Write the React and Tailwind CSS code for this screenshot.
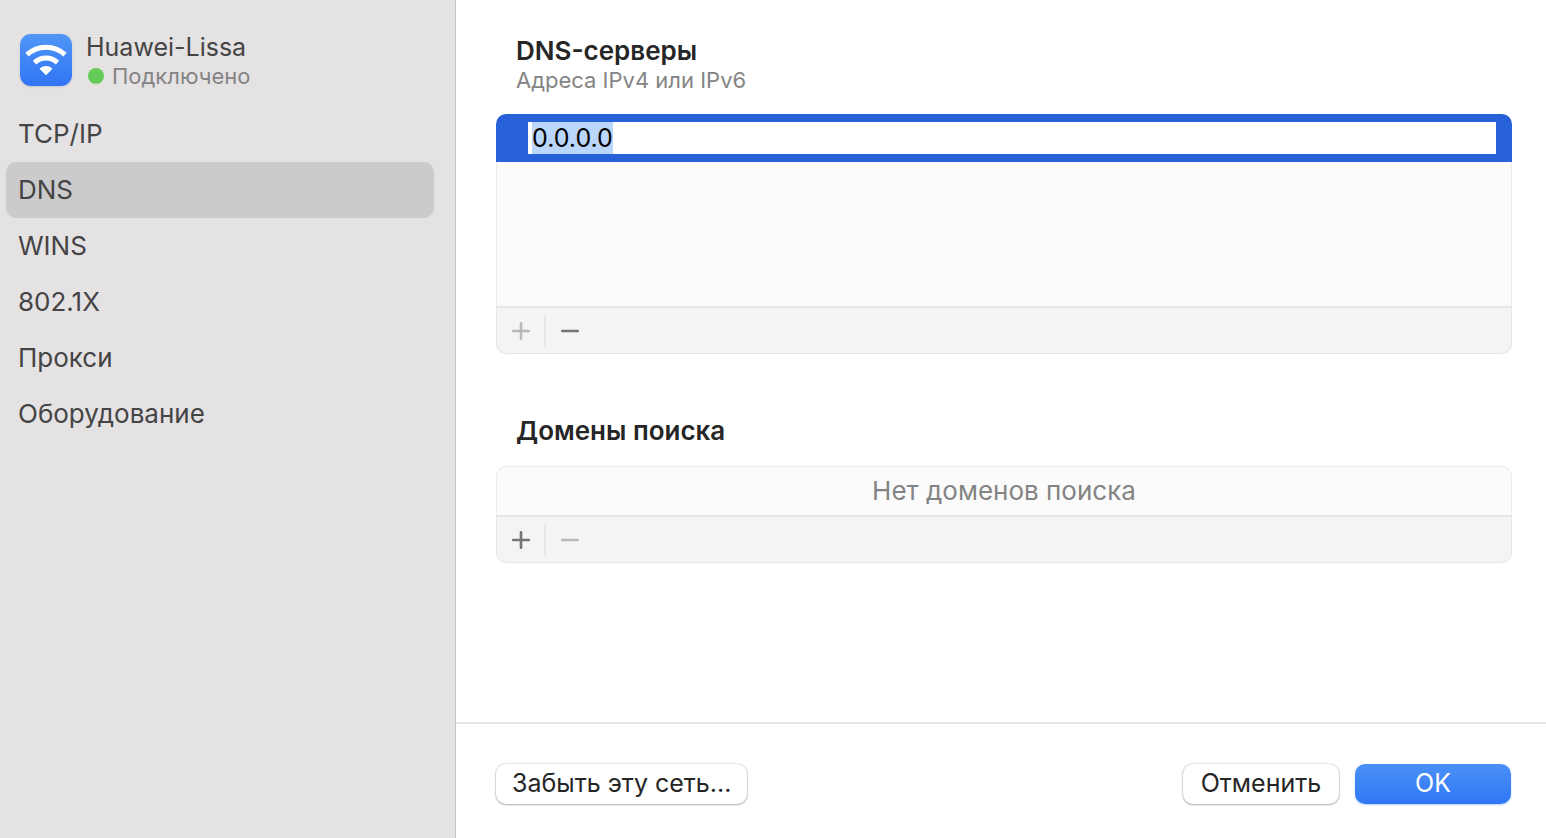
import React, { useEffect, useRef, useState } from 'react';

const TABS = ['TCP/IP', 'DNS', 'WINS', '802.1X', 'Прокси', 'Оборудование'];

const WifiBadge = () => (
  <svg viewBox="0 0 52 52" className="mt-0.5 h-[52px] w-[52px] shrink-0 rounded-[11px] shadow-sm" aria-hidden="true">
    <defs>
      <linearGradient id="wifi-bg" x1="0" y1="0" x2="0" y2="1">
        <stop offset="0" stopColor="#5096f6" />
        <stop offset="1" stopColor="#3175f5" />
      </linearGradient>
    </defs>
    <rect width="52" height="52" fill="url(#wifi-bg)" />
    <g fill="none" stroke="#fff" strokeWidth="5">
      <path d="M7 20.6 A27.9 27.9 0 0 1 45 20.6" />
      <path d="M14.5 28.6 A16.9 16.9 0 0 1 37.5 28.6" />
    </g>
    <path d="M26 41.2 L20 35.2 Q19.5 34.6 20 34.2 A9.3 9.3 0 0 1 32 34.2 Q32.5 34.6 32 35.2 Z" fill="#fff" />
  </svg>
);

const PlusIcon = () => (
  <svg viewBox="0 0 20 20" className="h-5 w-5" fill="none" stroke="currentColor" strokeWidth="2.6" strokeLinecap="round">
    <path d="M2.2 10h15.6M10 2.2v15.6" />
  </svg>
);

const MinusIcon = () => (
  <svg viewBox="0 0 20 20" className="h-5 w-5" fill="none" stroke="currentColor" strokeWidth="2.6" strokeLinecap="round">
    <path d="M2.2 10h15.6" />
  </svg>
);

const ListToolbar = ({ canAdd, canRemove }) => (
  <div className="flex h-12 items-center rounded-b-[10px] border border-t-2 border-[#e6e6e6] bg-[#f4f4f4]">
    <button
      type="button"
      aria-label="Добавить"
      disabled={!canAdd}
      className="flex h-8 w-[47px] items-center justify-center text-[#747474] disabled:text-[#b9b9b9]"
    >
      <PlusIcon />
    </button>
    <div className="h-8 w-0.5 bg-[#e6e6e6]"></div>
    <button
      type="button"
      aria-label="Удалить"
      disabled={!canRemove}
      className="flex h-8 w-[47px] items-center justify-center text-[#747474] disabled:text-[#b9b9b9]"
    >
      <MinusIcon />
    </button>
  </div>
);

const App = () => {
  const [activeTab, setActiveTab] = useState('DNS');
  const [server, setServer] = useState('0.0.0.0');
  const serverInput = useRef(null);

  // a new row opens in edit mode with its value selected
  useEffect(() => {
    serverInput.current.focus();
    serverInput.current.select();
  }, []);

  return (
    <div className="flex min-h-screen bg-white font-['Inter','Noto_Sans',sans-serif] text-[26px] leading-8 text-[#262626]">
      <aside className="w-[456px] shrink-0 border-r border-[#c6c5c6] bg-[#e4e2e3] pt-8 pr-[21px] pl-1.5 text-[#454445]">
        <div className="flex items-start gap-3.5 pl-3.5">
          <WifiBadge />
          <div>
            <div className="text-[25px] leading-[30px]">Huawei-Lissa</div>
            <div className="flex items-center gap-2 pl-0.5 text-[22px] leading-7 text-[#848384]">
              <span className="h-4 w-4 rounded-full bg-[#65cb57]"></span>
              Подключено
            </div>
          </div>
        </div>

        <nav className="mt-4 flex flex-col">
          {TABS.map((tab) => (
            <button
              key={tab}
              type="button"
              onClick={() => setActiveTab(tab)}
              className={`h-14 rounded-[10px] px-3 text-left ${tab === activeTab ? 'bg-[#cbcbcb]' : ''}`}
            >
              {tab}
            </button>
          ))}
        </nav>
      </aside>

      <div className="flex min-w-0 flex-1 flex-col">
        <main className="flex-1 pt-[35px] pr-[34px] pl-10">
          <section>
            <h2 className="px-5 font-semibold">
              <label htmlFor="dns-server">DNS-серверы</label>
            </h2>
            <p className="px-5 text-[22px] leading-[26px] text-[#848484]">Адреса IPv4 или IPv6</p>
            <div className="mt-[21px]">
              <div className="rounded-t-[10px] bg-[#2761d9] py-2 pr-4 pl-8">
                <input
                  id="dns-server"
                  ref={serverInput}
                  type="text"
                  value={server}
                  onChange={(e) => setServer(e.target.value)}
                  className="block h-8 w-full bg-white px-1 text-[25px] leading-8 text-black outline-none selection:bg-[#bad6fb] selection:text-black"
                />
              </div>
              <div className="h-36 border-x border-[#ebebeb] bg-[#fbfbfb]"></div>
              <ListToolbar canAdd={false} canRemove />
            </div>
          </section>

          <section className="mt-[61px]">
            <h2 className="px-5 font-semibold">Домены поиска</h2>
            <div className="mt-[19px]">
              <div className="rounded-t-[10px] border border-b-0 border-[#ebebeb] bg-[#fbfbfb] py-2 text-center text-[#848484]">
                Нет доменов поиска
              </div>
              <ListToolbar canAdd canRemove={false} />
            </div>
          </section>
        </main>

        <footer className="flex items-center gap-4 border-t-2 border-[#e5e5e5] pt-10 pr-[35px] pb-[34px] pl-10 text-[25px]">
          <button type="button" className="mr-auto h-10 rounded-[10px] bg-white px-4 pb-0.5 shadow-[0_0_1px_1px_#0000001a,0_1px_2px_#00000040]">
            Забыть эту сеть...
          </button>
          <button type="button" className="h-10 w-[156px] rounded-[10px] bg-white pb-0.5 shadow-[0_0_1px_1px_#0000001a,0_1px_2px_#00000040]">
            Отменить
          </button>
          <button
            type="button"
            className="h-10 w-[156px] rounded-[10px] bg-linear-to-b from-[#4b90f7] to-[#3077f6] pb-0.5 text-white shadow-[0_1px_2px_#3077f659]"
          >
            OK
          </button>
        </footer>
      </div>
    </div>
  );
};

export default App;
